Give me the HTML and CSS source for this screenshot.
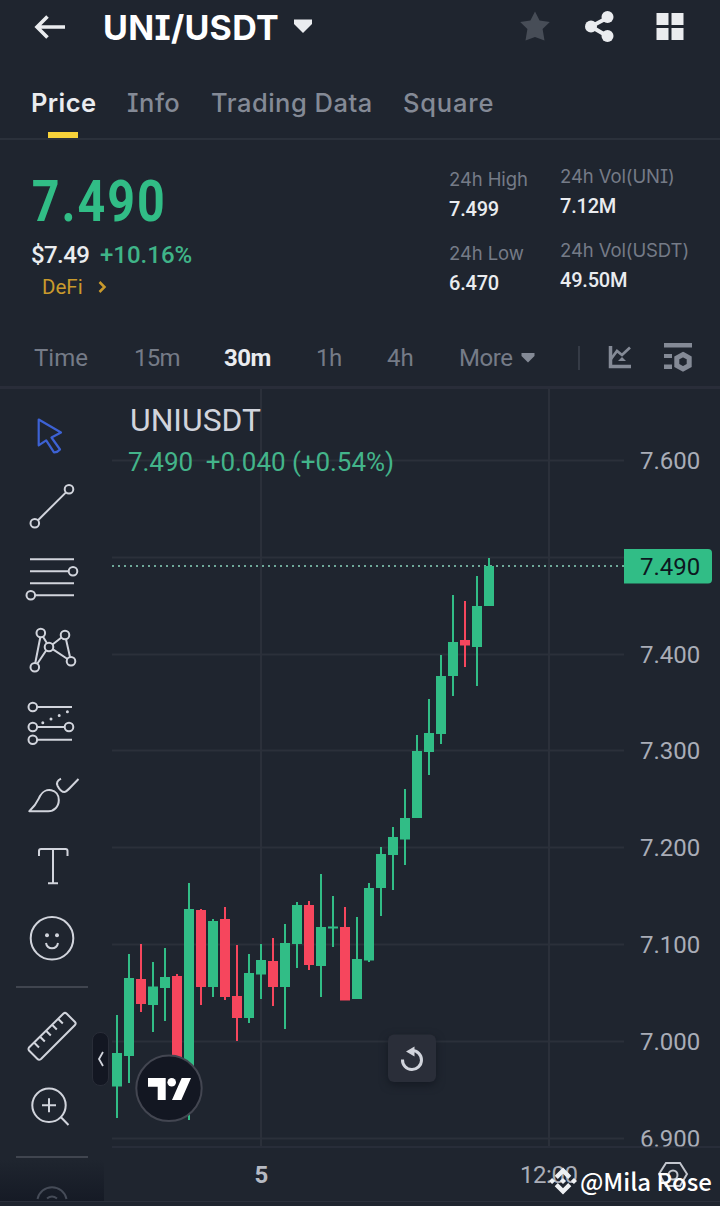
FILE: index.html
```html
<!DOCTYPE html>
<html lang="en">
<head>
<meta charset="utf-8">
<title>UNI/USDT</title>
<link rel="stylesheet" href="styles.css">
</head>
<body>
<div class="app">
  <header class="topbar">
    <svg class="back" width="32" height="26" viewBox="0 0 32 26"><path d="M32 13H4M14.500 2.500L4 13l10.500 10.500" fill="none" stroke="#eaecef" stroke-width="3.600"/></svg>
    <h1 class="pair">UNI/USDT</h1>
    <svg class="caret" width="20" height="16" viewBox="0 0 20 16"><path d="M1 .5h18V5l-9 9-9-9z" fill="#eaecef"/></svg>
    <div class="actions">
      <svg width="32" height="32" viewBox="0 0 32 32"><path d="M16 .5l4.600 9 10.200 1.500-7.200 7 1.900 11.500-9.500-3.500-9.500 3.500 1.900-11.500-7.200-7 10.200-1.500z" fill="#474d57"/></svg>
      <svg width="30" height="32" viewBox="1 0 30 32"><path d="M24 6.500L7 15.500l17 10" fill="none" stroke="#eaecef" stroke-width="4"/><g fill="#eaecef"><circle cx="23.500" cy="6" r="6"/><circle cx="7" cy="15.500" r="6"/><circle cx="23.500" cy="25" r="6"/></g></svg>
      <svg width="28" height="28" viewBox="0 0 28 28"><path d="M.5 0h12v12H.5zM15.500 0h12v12h-12zM.5 15h12v12H.5zM15.500 15h12v12h-12z" fill="#eaecef"/></svg>
    </div>
  </header>

  <nav class="tabs">
    <span class="tab active">Price</span><span class="tab info">Info</span><span class="tab trading">Trading Data</span><span class="tab">Square</span>
  </nav>

  <section class="summary">
    <div class="quote">
      <div class="last">7.490</div>
      <div class="sub"><span class="usd">$7.49</span><span class="pct">+10.16%</span></div>
      <div class="tag">DeFi <svg width="9" height="13" viewBox="0 0 9 13"><path d="M1.500 1l5 5-5 5" fill="none" stroke="#c99a2c" stroke-width="2.500"/></svg></div>
    </div>
    <dl class="stats range">
      <dt>24h High</dt><dd>7.499</dd>
      <dt>24h Low</dt><dd>6.470</dd>
    </dl>
    <dl class="stats volume">
      <dt>24h Vol(UNI)</dt><dd>7.12M</dd>
      <dt>24h Vol(USDT)</dt><dd>49.50M</dd>
    </dl>
  </section>

  <nav class="intervals">
    <span class="time">Time</span><span class="m15">15m</span><span class="m30">30m</span><span class="h1">1h</span><span class="h4">4h</span><span class="more">More</span>
    <svg class="more-caret" width="14" height="11" viewBox="0 0 14 11"><path d="M.5 0h13v3L7 9.500.5 3z" fill="#848a96"/></svg>
    <i class="divider"></i>
    <svg class="indicator" width="24" height="24" viewBox="0 0 24 24"><g fill="none" stroke="#848a96" stroke-width="3.500"><path d="M2.500 0v20.500H23"/><path d="M3 13l6-8 5 4 8-7.500" stroke-width="2.700"/></g><path d="M10 15l4-4 4 4z" fill="#848a96"/></svg>
    <svg class="settings" width="30" height="30" viewBox="0 0 30 30"><path d="M1 0h28v4.500H1zM1 11h8v4H1zM1 21.500h8V26H1z" fill="#848a96"/><path d="M20 11.500l6.200 3.400v7.600L20 25.900l-6.200-3.400v-7.600z" fill="none" stroke="#848a96" stroke-width="5"/></svg>
  </nav>

  <main class="workspace">
    <aside class="tools">
      <svg class="tool" viewBox="0 0 104 72"><path class="cursor" d="M38.700 19.500L61 32.500l-9.500 5L60 49.500q-2.500 3-6 2.800L46.200 40.300l-7.500 5z"/></svg>
      <svg class="tool" viewBox="0 0 104 72"><path d="M38 48.200L66 20.400"/><circle cx="34.800" cy="51.300" r="4.300"/><circle cx="69" cy="17.300" r="4.300"/></svg>
      <svg class="tool" viewBox="0 0 104 72"><path d="M30 15.300h44M30 27.300h39M30 39.300h44M35 51.300h39"/><circle cx="73" cy="27.300" r="4.300"/><circle cx="30.800" cy="51.300" r="4.300"/></svg>
      <svg class="tool" viewBox="0 0 104 72"><path d="M40.300 21.300l-5 25.500M43 20.700l4 6.600M61.500 21.500L52.500 28.500M66 23.300l4 17.700M53 33.300l14.500 9.700M46.300 34.300l-9 13.500"/><circle cx="40.800" cy="17" r="4.300"/><circle cx="65" cy="19" r="4.300"/><circle cx="49" cy="31" r="4.300"/><circle cx="71" cy="45.300" r="4.300"/><circle cx="34.800" cy="51.300" r="4.300"/></svg>
      <svg class="tool" viewBox="0 0 104 72"><path d="M37 19h35M37 39h28M37 51.700h35"/><circle cx="32.800" cy="19" r="4.300"/><circle cx="32.800" cy="39" r="4.300"/><circle cx="69" cy="39" r="4.300"/><circle cx="32.800" cy="51.700" r="4.300"/><path class="dots" d="M42.800 34.800L68 23.400"/></svg>
      <svg class="tool" viewBox="0 0 104 72"><path d="M29.300 51.300C37 44 37.500 41 40 36c5-9.500 18.800-7 18.800 4 0 7-5 11.300-10.500 11.300zM61 18.700c-4 2-4.800 4-3.500 7 2 4 4.500 6.300 7 6.300 2 0 2.500-1 14-13"/></svg>
      <svg class="tool" viewBox="0 0 104 72"><path d="M39 24v-5q0-2 2-2h24.500q2 0 2 2v5M53 17v34M48 51.300h10"/></svg>
      <svg class="tool" viewBox="0 0 104 72"><circle cx="52" cy="34.300" r="21.300"/><path d="M46 39q1 5.300 6 5.300T58 39"/><g class="solid"><circle cx="47" cy="31.300" r="2"/><circle cx="57" cy="31.300" r="2"/></g></svg>
      <hr class="rule">
      <svg class="tool" viewBox="0 0 104 72"><path d="M63.500 13.500q1.500-1.300 3 0l8.500 8.500q1.300 1.300 0 3L41 59q-2 1.500-3.500 0L29 50.500q-1-1.500 0-3zM34.500 43l4.500 4.500M40.300 37l4.500 4.500M46.300 31l4.500 4.500M52.300 25l4.500 4.500M58.300 19l4.500 4.500"/></svg>
      <svg class="tool" viewBox="0 0 104 72"><circle cx="49" cy="33.300" r="16.700"/><path d="M42 33.300h14M49 26.300v14M60.500 44.700l8 8.300"/></svg>
      <hr class="rule second">
      <div class="more-tools"><svg width="104" height="42" viewBox="0 0 104 42"><path d="M37.500 40a14.800 14.800 0 0 1 29 0M47 39.500q5-4 10 0" transform="translate(0 -1)" fill="none" stroke="#454b57" stroke-width="2"/></svg></div>
    </aside>

    <svg class="chart" viewBox="104 389 616 812">
      <path class="grid" d="M112 460.500H624M112 557.500H624M112 654.500H624M112 750.500H624M112 847.500H624M112 944.500H624M112 1041.500H624M112 1138.500H624M261 389V1147M549 389V1147"/>
      <path class="axis-line" d="M112 1147H720"/>
      <text class="symbol" x="130" y="431" textLength="131" lengthAdjust="spacingAndGlyphs">UNIUSDT</text>
      <text class="change" x="128" y="471" textLength="266" xml:space="preserve">7.490&#160; +0.040 (+0.54%)</text>
      <path class="last-line" d="M112 566H624"/>
      <path class="wick up" d="M117 1015V1118M129 954V1083M153 962V1032M165 948V1021M189 883V1120M213 919V997M249 954V1023M261 944V999M285 924V1029M297 902V968M321 874V997M333 896V947M357 917V999M369 883V962M381 847V916M393 827V890M405 789V865M417 735V818M429 699V775M441 655V744M453 595V696M477 576V686M489 558V606"/>
      <path class="body up" d="M117 1053V1086.500M129 978V1056M153 986.500V1005M165 977V988M189 909V1080M213 921V987M249 973V1018M261 960V974.500M285 943V987M297 905V944M321 927V966M333 926.500V928.500M357 959V999M369 888V960.500M381 854V888M393 837V855M405 818V839.500M417 751V818M429 733V752M441 676V734M453 642V676M477 606V647M489 566V606"/>
      <path class="wick down" d="M141 944V1012M177 974V1075M201 909V1005M225 907V1000M237 945V1041M273 938V1006M309 901V970M345 907V1000M465 601V667"/>
      <path class="body down" d="M141 979V1004M177 976V1075M201 910V987M225 919V997M237 996V1018M273 961V987M309 905V965M345 927V1000.500M465 640V645.500"/>
      <clipPath id="pane"><path d="M104 389h616v757.500H104z"/></clipPath>
      <g class="scale" clip-path="url(#pane)">
        <text x="640" y="469">7.600</text>
        <text x="640" y="663">7.400</text>
        <text x="640" y="759">7.300</text>
        <text x="640" y="856">7.200</text>
        <text x="640" y="953">7.100</text>
        <text x="640" y="1050">7.000</text>
        <text x="640" y="1147">6.900</text>
      </g>
      <path d="M624 549h84q4 0 4 4v26.500q0 4-4 4h-84z" fill="#31bd86"/>
      <text class="tagtext" x="640" y="575">7.490</text>
      <text class="day" x="261.500" y="1183">5</text>
      <text class="hour" x="520" y="1183" textLength="58">12:00</text>
      <g fill="none" stroke="#c3c6ce" stroke-width="2"><path d="M666 1163h14l7 11-7 12h-14l-7-12z"/><circle cx="673" cy="1175" r="4.500"/></g>
      <circle cx="169" cy="1088.300" r="32.700" fill="#131722" stroke="#434651" stroke-width="2"/>
      <g fill="#fff"><path d="M148 1078h17.700v22h-8v-13.300H148zM181.700 1078h9.300l-9.700 22h-9.300z"/><circle cx="171.700" cy="1082.300" r="4.300"/></g>
      <g class="reset"><rect x="388" y="1034.500" width="48" height="47.500" rx="6"/><path d="M402.500 1059.500a9.500 9.500 0 1 0 9.500-9"/><path class="head" d="M406 1051.500l8.500-5v10z"/></g>
    </svg>

    <div class="collapse"><svg width="8" height="16" viewBox="0 0 8 16"><path d="M6 1L2 8l4 7" fill="none" stroke="#d1d4dc" stroke-width="1.800"/></svg></div>
  </main>

  <div class="watermark">
    <svg width="28" height="28" viewBox="0 0 28 28" fill="#eef0f3"><path d="M14 .5l8.300 8.300-3.100 3.100L14 6.700l-5.200 5.200-3.100-3.100zM14 27.500l8.300-8.300-3.100-3.100-5.200 5.200-5.200-5.200-3.100 3.100zM3.100 10.900L6.200 14l-3.100 3.100L0 14zM24.900 10.900L28 14l-3.100 3.100-3.100-3.100zM14 10.900l3.100 3.100-3.100 3.100-3.100-3.100z"/></svg>
    <span>@Mila Rose</span>
  </div>
</div>
</body>
</html>
```
FILE: styles.css
```css
* { box-sizing: border-box; }
body { margin: 0; background: #1f252f; font-family: Roboto, "Liberation Sans", sans-serif; color: #eaecef; }
svg { display: block; flex: none; }
.app { position: relative; width: 720px; height: 1206px; overflow: hidden; display: flex; flex-direction: column; }

.topbar { height: 54px; flex: none; display: flex; align-items: center; padding: 0 36px 0 33px; }
.pair { margin: 0 0 0 38px; width: 174px; font: 650 34px/54px Inter, sans-serif; font-feature-settings: "cv08"; letter-spacing: .3px; color: #fff; white-space: nowrap; padding-top: 2px; }
.caret { margin-left: 16px; }
.actions { margin-left: auto; display: flex; align-items: center; }
.actions svg + svg { margin-left: 34px; }
.actions svg:last-child { margin-left: 41px; }

.tabs { height: 86px; flex: none; display: flex; padding: 22px 0 0 31px; border-bottom: 2px solid #2b313b; font: 500 25.500px/54px Inter, sans-serif; font-feature-settings: "cv08"; letter-spacing: .5px; color: #848a96; white-space: nowrap; }
.tab { position: relative; height: 63px; margin-right: 31px; }
.tab.active { color: #eaecef; width: 65px; font-weight: 600; letter-spacing: .4px; }
.tab.info { width: 53px; }
.tab.trading { width: 161px; }
.tab:last-child { letter-spacing: .8px; }
.tab.active::after { content: ""; position: absolute; left: 17px; bottom: 1px; width: 30px; height: 6px; background: #f8d33a; }

.summary { height: 190px; flex: none; display: flex; padding-left: 31px; }
.quote { width: 418px; padding-top: 31px; }
.last { font-size: 57px; font-weight: 700; line-height: 62px; letter-spacing: 2.300px; color: #31bd86; padding-left: 1px; transform: scaleX(.85); transform-origin: 0 50%; }
.sub { display: flex; font-size: 24px; font-weight: 500; line-height: 30px; margin-top: 7px; }
.usd { width: 69px; letter-spacing: -.6px; }
.pct { color: #3fb488; }
.tag { display: flex; align-items: center; gap: 15px; padding-left: 11px; font-size: 20.500px; line-height: 34px; color: #c99a2c; }
.stats { margin: 0; width: 111px; padding-top: 25px; white-space: nowrap; }
.stats.volume { width: 150px; padding-top: 22px; }
.stats dt { font: 400 18.500px/28px Inter, sans-serif; font-feature-settings: "cv08"; color: #757b87; letter-spacing: -.1px; }
.stats dd { margin: 0 0 15px; padding-top: 2px; font-size: 20px; line-height: 29px; font-weight: 500; letter-spacing: -.2px; }

.intervals { height: 59px; flex: none; display: flex; align-items: center; padding-left: 34px; border-bottom: 3px solid #292d39; font-size: 24px; color: #757b87; white-space: nowrap; }
.time { width: 100px; }
.m15 { width: 90px; letter-spacing: -.8px; }
.m30 { width: 92px; color: #eaecef; font-weight: 700; letter-spacing: -.5px; }
.h1 { width: 71px; letter-spacing: -.5px; }
.h4 { width: 72px; }
.more { width: 62px; letter-spacing: -.4px; }
.divider { width: 2px; height: 24px; margin-left: 43px; background: #353b46; }
.indicator { margin-left: 28px; }
.settings { margin-left: 31px; }

.workspace { position: relative; flex: none; height: 813px; display: flex; border-bottom: 1px solid #2b303b; }
.tools { width: 104px; padding-top: 11px; display: flex; flex-direction: column; overflow: hidden; }
.tool { width: 104px; height: 72px; fill: none; stroke: #d1d4dc; stroke-width: 2; stroke-linejoin: round; }
.tool .cursor { stroke: #3d62d4; stroke-width: 2.200; }
.tool .dots { stroke-width: 3; stroke-linecap: round; stroke-dasharray: 0 9; }
.tool .solid { fill: #d1d4dc; stroke: none; }
.rule { flex: none; width: 72px; height: 2px; margin: 10px 0 12px 16px; border: 0; background: #40454f; }
.rule.second { margin: 12px 0 2px 16px; }
.more-tools { height: 42px; background: linear-gradient(#1f252f, #151a25); }
.chart { width: 616px; height: 812px; font-family: Roboto, sans-serif; }
.grid { fill: none; stroke: #2b303a; stroke-width: 2; }
.axis-line { stroke: #282d39; stroke-width: 2; }
.symbol { font-size: 30.500px; fill: #d1d4dc; }
.change { font-size: 26px; fill: #43b48a; }
.last-line { stroke: #6fa99a; stroke-width: 2; stroke-dasharray: 2 4; }
.wick { stroke-width: 2; fill: none; }
.body { stroke-width: 10; fill: none; }
.up { stroke: #31bd86; }
.down { stroke: #f6465d; }
.scale, .hour { font-size: 24px; fill: #a9adb7; }
.tagtext { font-size: 24px; fill: #0d1720; }
.day { font-size: 24px; font-weight: 700; fill: #b6bac3; text-anchor: middle; }
.reset { filter: drop-shadow(0 3px 4px #141922); }
.reset rect { fill: #2a2e39; }
.reset path { fill: none; stroke: #d1d4dc; stroke-width: 3; }
.reset .head { fill: #d1d4dc; stroke: none; }
.collapse { position: absolute; left: 92px; top: 643px; width: 17px; height: 54px; border: 1px solid #292d38; border-radius: 8px; background: #131722; display: flex; align-items: center; justify-content: center; }
.watermark { position: absolute; left: 549px; top: 1163px; display: flex; align-items: center; gap: 3px; font: 500 24px/36px "Noto Sans CJK SC", sans-serif; color: #fff; white-space: nowrap; }
```
